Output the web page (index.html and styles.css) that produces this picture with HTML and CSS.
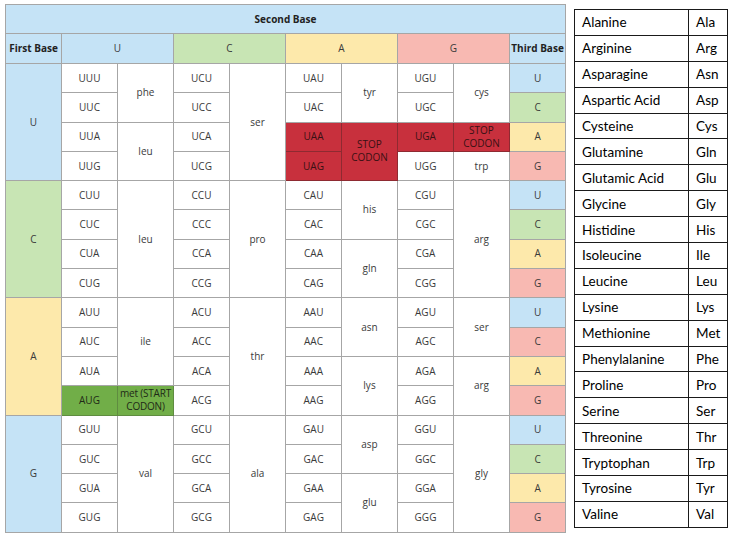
FILE: index.html
```html
<!DOCTYPE html>
<html>
<head>
<meta charset="utf-8">
<link rel="stylesheet" href="styles.css">
</head>
<body>
<div class="page">
<table class="codon">
  <colgroup>
    <col class="c"><col class="c"><col class="c"><col class="c"><col class="c"><col class="c"><col class="c"><col class="c"><col class="c"><col class="c">
  </colgroup>
  <tr class="h1"><th colspan="10" class="blue">Second Base</th></tr>
  <tr class="h2">
    <th class="blue">First Base</th>
    <td colspan="2" class="blue">U</td>
    <td colspan="2" class="green">C</td>
    <td colspan="2" class="yellow">A</td>
    <td colspan="2" class="pink">G</td>
    <th class="blue">Third Base</th>
  </tr>
  <!-- U -->
  <tr><td rowspan="4" class="blue">U</td><td>UUU</td><td rowspan="2">phe</td><td>UCU</td><td rowspan="4">ser</td><td>UAU</td><td rowspan="2">tyr</td><td>UGU</td><td rowspan="2">cys</td><td class="blue">U</td></tr>
  <tr><td>UUC</td><td>UCC</td><td>UAC</td><td>UGC</td><td class="green">C</td></tr>
  <tr><td>UUA</td><td rowspan="2">leu</td><td>UCA</td><td class="red">UAA</td><td rowspan="2" class="red">STOP<br>CODON</td><td class="red">UGA</td><td class="red">STOP<br>CODON</td><td class="yellow">A</td></tr>
  <tr><td>UUG</td><td>UCG</td><td class="red">UAG</td><td>UGG</td><td>trp</td><td class="pink">G</td></tr>
  <!-- C -->
  <tr><td rowspan="4" class="green">C</td><td>CUU</td><td rowspan="4">leu</td><td>CCU</td><td rowspan="4">pro</td><td>CAU</td><td rowspan="2">his</td><td>CGU</td><td rowspan="4">arg</td><td class="blue">U</td></tr>
  <tr><td>CUC</td><td>CCC</td><td>CAC</td><td>CGC</td><td class="green">C</td></tr>
  <tr><td>CUA</td><td>CCA</td><td>CAA</td><td rowspan="2">gln</td><td>CGA</td><td class="yellow">A</td></tr>
  <tr><td>CUG</td><td>CCG</td><td>CAG</td><td>CGG</td><td class="pink">G</td></tr>
  <!-- A -->
  <tr><td rowspan="4" class="yellow">A</td><td>AUU</td><td rowspan="3">ile</td><td>ACU</td><td rowspan="4">thr</td><td>AAU</td><td rowspan="2">asn</td><td>AGU</td><td rowspan="2">ser</td><td class="blue">U</td></tr>
  <tr><td>AUC</td><td>ACC</td><td>AAC</td><td>AGC</td><td class="pink">C</td></tr>
  <tr><td>AUA</td><td>ACA</td><td>AAA</td><td rowspan="2">lys</td><td>AGA</td><td rowspan="2">arg</td><td class="yellow">A</td></tr>
  <tr><td class="start">AUG</td><td class="start tight">met (START<br>CODON)</td><td>ACG</td><td>AAG</td><td>AGG</td><td class="pink">G</td></tr>
  <!-- G -->
  <tr><td rowspan="4" class="blue">G</td><td>GUU</td><td rowspan="4">val</td><td>GCU</td><td rowspan="4">ala</td><td>GAU</td><td rowspan="2">asp</td><td>GGU</td><td rowspan="4">gly</td><td class="blue">U</td></tr>
  <tr><td>GUC</td><td>GCC</td><td>GAC</td><td>GGC</td><td class="green">C</td></tr>
  <tr><td>GUA</td><td>GCA</td><td>GAA</td><td rowspan="2">glu</td><td>GGA</td><td class="yellow">A</td></tr>
  <tr><td>GUG</td><td>GCG</td><td>GAG</td><td>GGG</td><td class="pink">G</td></tr>
</table>

<table class="abbr">
  <tr><td>Alanine</td><td>Ala</td></tr>
  <tr><td>Arginine</td><td>Arg</td></tr>
  <tr><td>Asparagine</td><td>Asn</td></tr>
  <tr><td>Aspartic Acid</td><td>Asp</td></tr>
  <tr><td>Cysteine</td><td>Cys</td></tr>
  <tr><td>Glutamine</td><td>Gln</td></tr>
  <tr><td>Glutamic Acid</td><td>Glu</td></tr>
  <tr><td>Glycine</td><td>Gly</td></tr>
  <tr><td>Histidine</td><td>His</td></tr>
  <tr><td>Isoleucine</td><td>Ile</td></tr>
  <tr><td>Leucine</td><td>Leu</td></tr>
  <tr><td>Lysine</td><td>Lys</td></tr>
  <tr><td>Methionine</td><td>Met</td></tr>
  <tr><td>Phenylalanine</td><td>Phe</td></tr>
  <tr><td>Proline</td><td>Pro</td></tr>
  <tr><td>Serine</td><td>Ser</td></tr>
  <tr><td>Threonine</td><td>Thr</td></tr>
  <tr><td>Tryptophan</td><td>Trp</td></tr>
  <tr><td>Tyrosine</td><td>Tyr</td></tr>
  <tr><td>Valine</td><td>Val</td></tr>
</table>
</div>
</body>
</html>
```

FILE: styles.css
```css
html, body {
  margin: 0;
  padding: 0;
  background: #ffffff;
}

.page {
  display: flex;
  align-items: flex-start;
  padding: 4px 0 0 5px;
  gap: 8px;
}

.codon {
  border-collapse: collapse;
  table-layout: fixed;
  width: 561px;
  font-family: "Open Sans", "DejaVu Sans", sans-serif;
  font-size: 10px;
  color: #3a3a3a;
}

.codon col.c {
  width: 56px;
}

.codon th,
.codon td {
  border: 1px solid #a6a6a6;
  text-align: center;
  vertical-align: middle;
  padding: 0;
  line-height: 13px;
  white-space: nowrap;
  background: #ffffff;
}

.codon th {
  font-weight: 700;
  font-size: 10px;
  color: #222222;
}

.codon .tight {
  letter-spacing: -0.2px;
}

.codon tr {
  height: 29.3px;
}

.codon tr.h1 {
  height: 29px;
}

.codon tr.h2 {
  height: 30px;
}

.codon .blue { background: #c5e3f6; }
.codon .green { background: #c8e5b4; }
.codon .yellow { background: #fde9ab; }
.codon .pink { background: #f8b9b2; }
.codon .red {
  background: #c8303d;
  color: #3a1014;
  border-color: #8e2a31;
}
.codon .start {
  background: #71ae48;
  color: #1f2a17;
  border-color: #5f8c40;
}

.abbr {
  margin-top: 5px;
  border-collapse: collapse;
  table-layout: fixed;
  width: 154px;
  font-family: Lato, "Liberation Sans", sans-serif;
  font-size: 13.5px;
  color: #000000;
}

.abbr tr {
  height: 25.9px;
}

.abbr td {
  border: 1px solid #1a1a1a;
  padding: 0 0 0 7px;
  vertical-align: middle;
}

.abbr td:first-child {
  width: 106px;
}
```
